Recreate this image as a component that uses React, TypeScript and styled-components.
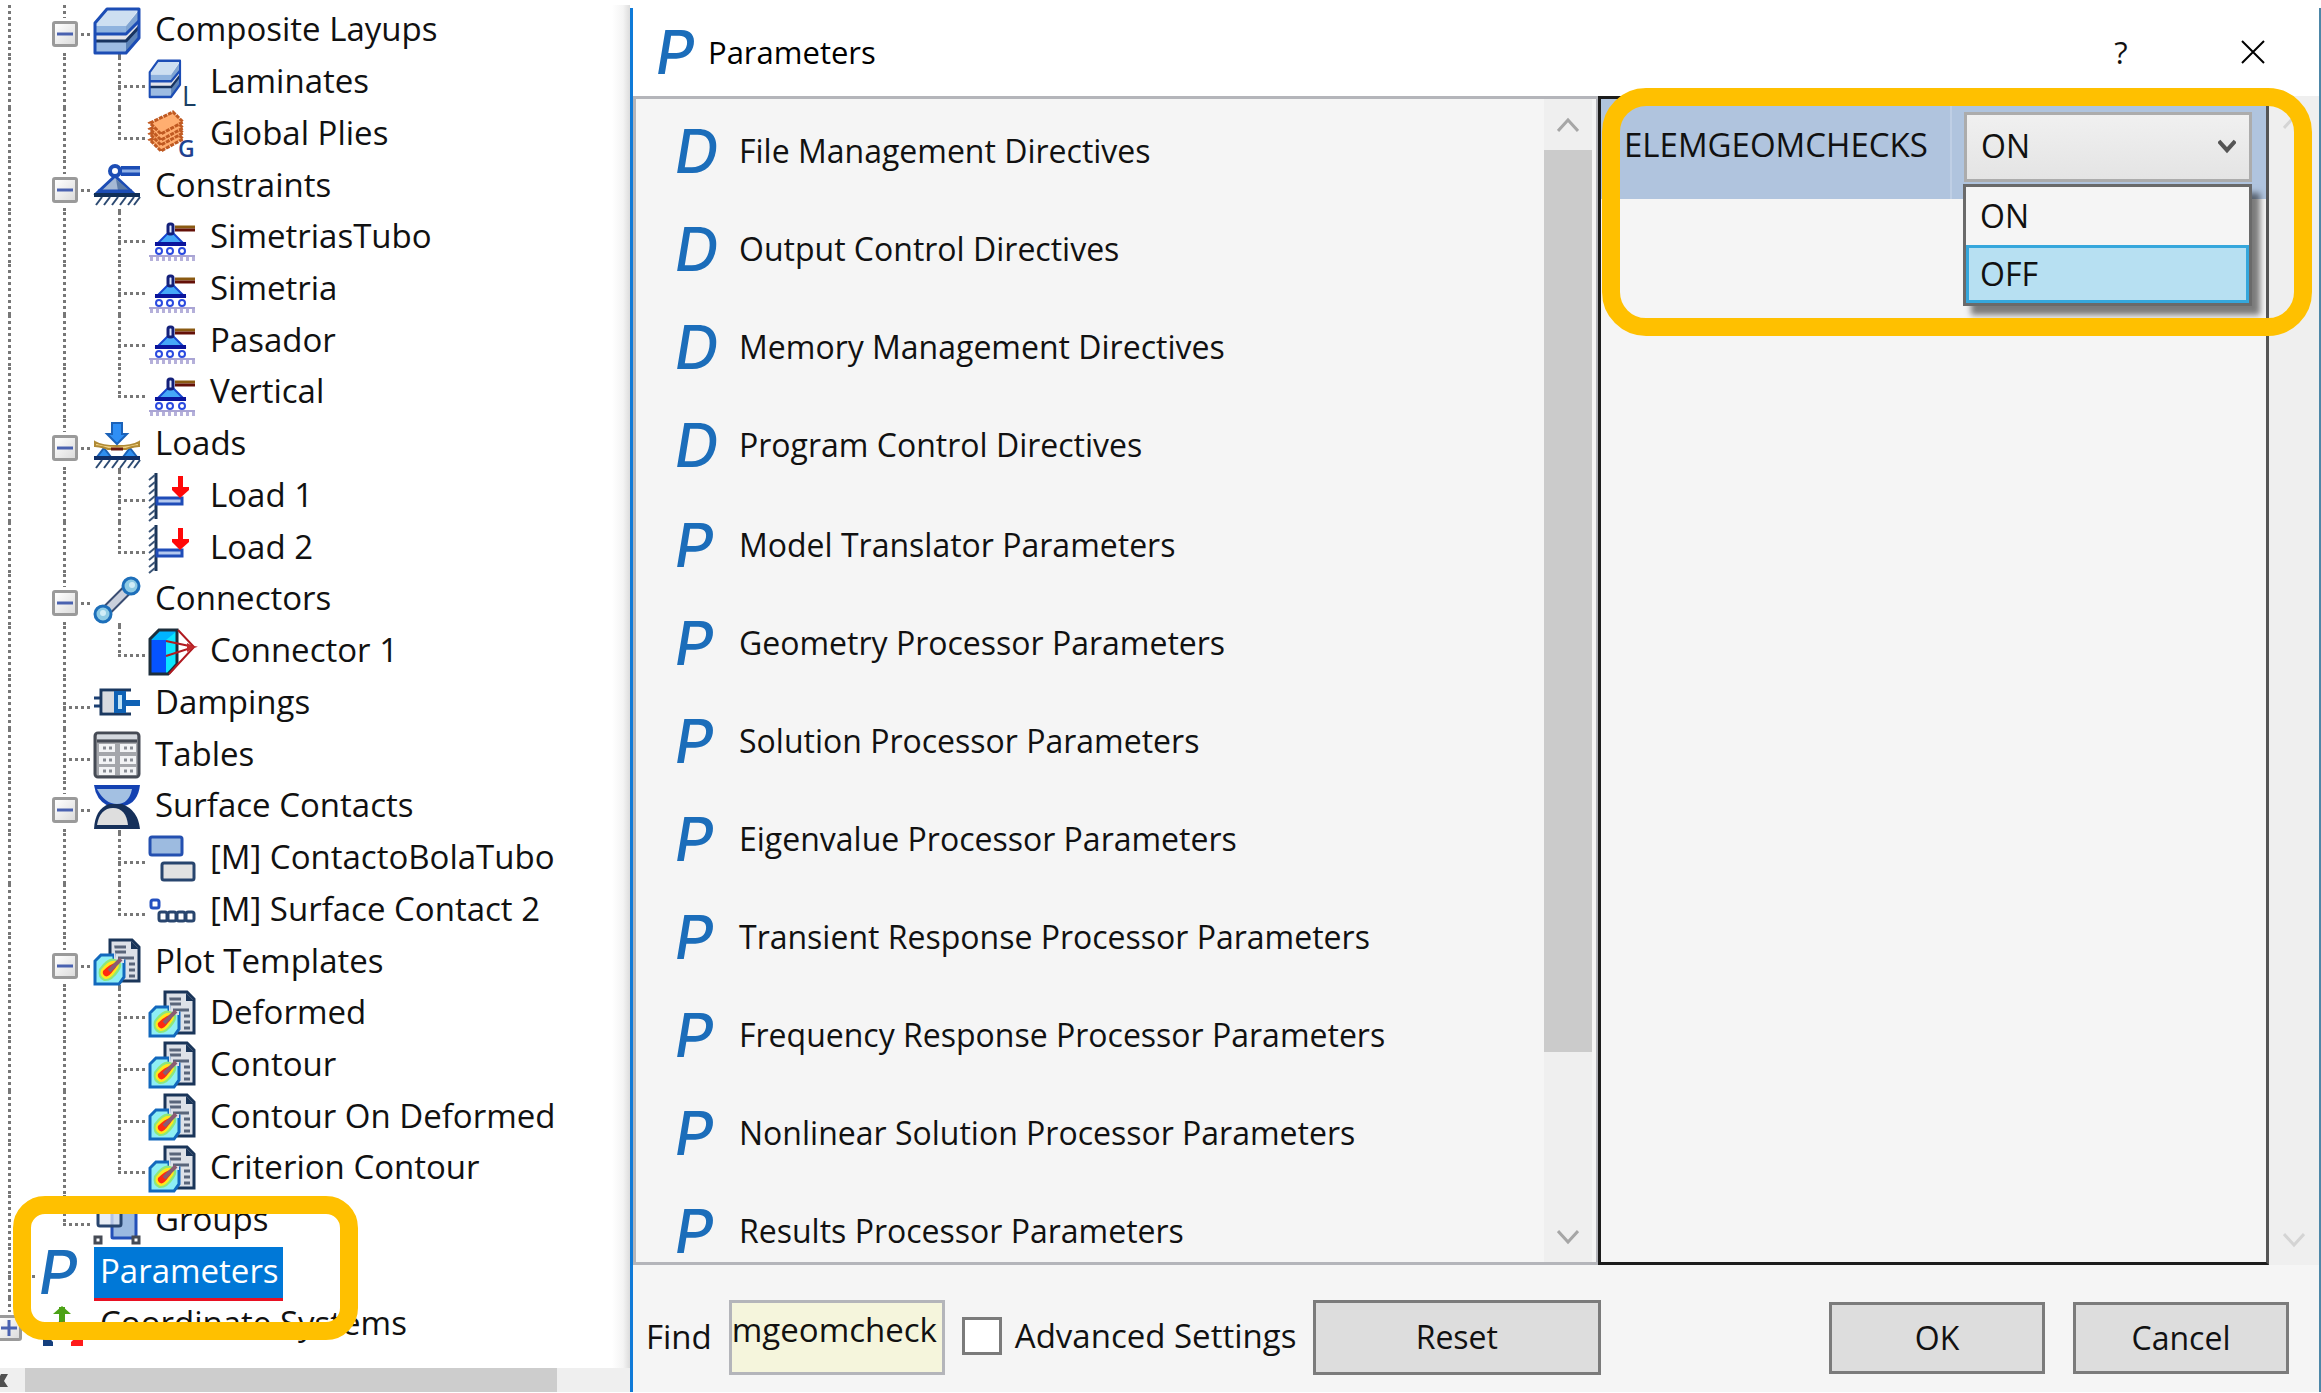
import React from 'react';
import styled, { createGlobalStyle, css } from 'styled-components';

const GlobalStyle = createGlobalStyle`
  * { box-sizing: border-box; }
  body {
    margin: 0;
    background: #fff;
    color: #111;
    font-family: 'Open Sans', 'Noto Sans', sans-serif;
    font-size: 33px;
    line-height: 40px;
  }
  ul { list-style: none; margin: 0; padding: 0; }
  button, input, select { font: inherit; color: inherit; margin: 0; border-radius: 0; }
`;

const Page = styled.div`
  display: flex;
  height: 100vh;
  min-height: 1393px;
  padding-bottom: 1px;
  overflow: hidden;
`;

/* ---------- model tree ---------- */

const TreePanel = styled.nav`
  position: relative;
  flex: 0 0 630px;
  display: flex;
  flex-direction: column;
  margin-top: 5px;
  background: linear-gradient(to left, #dcdcdc, #f4f4f4 7px, #fff 18px);
`;

const TreeList = styled.ul`
  flex: 1;
  display: grid;
  grid-auto-rows: 1fr;
  padding-bottom: 18px;
`;

const TreeRow = styled.li`
  display: flex;
  min-height: 0;
`;

type Line = 'none' | 'full' | 'end' | 'pass';

const dotsV = 'repeating-linear-gradient(to bottom, #777 0 3px, transparent 3px 6px)';
const dotsH = 'repeating-linear-gradient(to right, #777 0 3px, transparent 3px 6px)';

const Gutter = styled.span<{ $line: Line; $root?: boolean }>`
  flex: none;
  width: ${(p) => (p.$root ? 37 : 55)}px;
  display: flex;
  align-items: center;
  justify-content: ${(p) => (p.$root ? 'flex-start' : 'center')};
  padding-top: 7px;
  ${(p) => {
    const x = p.$root ? 8 : 26;
    const tall = p.$line === 'end' ? 'calc(50% + 4px)' : '100%';
    if (p.$line === 'none') return '';
    if (p.$line === 'pass')
      return css`
        background: ${dotsV} ${x}px 0 / 3px 100% no-repeat;
      `;
    return css`
      background:
        ${dotsV} ${x}px 0 / 3px ${tall} no-repeat,
        ${dotsH} ${x}px calc(50% + 4px) / 31px 3px no-repeat;
    `;
  }}
`;

const Expander = styled.button<{ $root?: boolean }>`
  display: grid;
  place-items: center;
  width: 26px;
  height: 26px;
  padding: 0;
  margin-left: ${(p) => (p.$root ? '-4px' : '0')};
  border: 3px solid #9a9a9a;
  border-radius: 3px;
  background: linear-gradient(135deg, #fff, #dcdcdc);
  box-shadow: 0 0 0 3px #fff;
`;

const IconCell = styled.span<{ $open?: boolean }>`
  flex: none;
  width: 57px;
  display: flex;
  align-items: center;
  padding-left: 2px;
  ${(p) =>
    p.$open &&
    css`
      background: ${dotsV} 26px 100% / 3px 3px no-repeat;
    `}
`;

const Label = styled.a<{ $selected?: boolean }>`
  display: flex;
  align-items: center;
  padding: 0 4px 3px 6px;
  color: #111;
  text-decoration: none;
  white-space: nowrap;
  ${(p) =>
    p.$selected &&
    css`
      color: #fff;
      background: #0078d7;
      box-shadow: 0 3px 0 #e81123;
    `}
`;

const HScroll = styled.div`
  flex: none;
  display: flex;
  align-items: center;
  height: 24px;
  background: #efefef;
`;

const HThumb = styled.div`
  width: 532px;
  height: 100%;
  margin-left: 17px;
  background: #cdcdcd;
`;

const Highlight = styled.div<{ $radius: number }>`
  position: absolute;
  border: 18px solid #ffc000;
  border-radius: ${(p) => p.$radius}px;
  pointer-events: none;
`;

const TreeHighlight = styled(Highlight)`
  left: 13px;
  bottom: 52px;
  width: 345px;
  height: 144px;
`;

const LetterMark = styled.span`
  width: 46px;
  color: #1b6dba;
  font-family: Inter, 'Open Sans', sans-serif;
  font-size: 60px;
  font-style: italic;
  font-weight: 500;
  line-height: 46px;
`;

/* ---------- dialog ---------- */

const Dialog = styled.section`
  flex: 1;
  min-width: 0;
  display: flex;
  flex-direction: column;
  margin-top: 8px;
  border-left: 3px solid #0f7ad8;
  border-right: 2px solid #4d87a8;
  background: #f5f5f5;
`;

const TitleBar = styled.header`
  flex: none;
  display: flex;
  align-items: center;
  height: 88px;
  padding: 0 33px 0 23px;
  background: #fff;
`;

const Title = styled.h1`
  flex: 1;
  margin: 0 0 0 6px;
  font-size: 31px;
  font-weight: 400;
  line-height: 40px;
  color: #000;
`;

const TitleButton = styled.button`
  display: grid;
  place-items: center;
  width: 66px;
  height: 60px;
  padding: 0;
  border: 0;
  background: none;
  margin-left: 66px;
  font-size: 31px;
`;

const Panes = styled.div`
  flex: 1;
  min-height: 0;
  display: grid;
  grid-template-columns: minmax(0, 965fr) minmax(0, 721fr);
`;

const ListPane = styled.div`
  display: flex;
  min-height: 0;
  border: 3px solid #b4b5ba;
  border-right-width: 2px;
`;

const Directives = styled.ul`
  flex: 1;
  min-width: 0;
  padding-top: 3px;
  overflow: hidden;
`;

const Directive = styled.li<{ $gap: boolean }>`
  display: flex;
  align-items: center;
  gap: 18px;
  height: 98px;
  padding-left: 39px;
  margin-top: ${(p) => (p.$gap ? 2 : 0)}px;
  font-size: 32px;
  white-space: nowrap;
`;

const Scrollbar = styled.div<{ $faint?: boolean }>`
  flex: none;
  width: ${(p) => (p.$faint ? 50 : 48)}px;
  margin-right: ${(p) => (p.$faint ? 0 : 4)}px;
  display: flex;
  flex-direction: column;
  align-items: center;
  justify-content: space-between;
  background: #efefef;
  color: ${(p) => (p.$faint ? '#d4d4d4' : '#a6a6a6')};
`;

const ScrollButton = styled.button`
  flex: none;
  display: grid;
  place-items: center;
  width: 100%;
  height: 51px;
  padding: 0;
  border: 0;
  background: none;
`;

const ScrollTrack = styled.div`
  flex: 1;
  width: 100%;
`;

const ScrollThumb = styled.div`
  height: 85%;
  background: #cbcbcb;
`;

const SettingsPane = styled.div`
  position: relative;
  display: flex;
  min-height: 0;
`;

const SettingsBox = styled.div`
  flex: 1;
  min-width: 0;
  border: 3px solid #1c1c1c;
  border-right-color: #555;
`;

const Setting = styled.div`
  display: flex;
  height: 100px;
  background: #b0c4de;
`;

const SettingLabel = styled.label`
  flex: 1;
  min-width: 0;
  padding: 26px 0 0 23px;
  border-right: 2px solid #bfcfe5;
`;

const SettingValue = styled.div`
  flex: none;
  width: 314px;
  padding: 13px 14px 0 12px;
`;

const Combo = styled.div`
  position: relative;
  font-size: 32px;
  svg { position: absolute; right: 16px; top: 25px; pointer-events: none; color: #555; }
`;

const Select = styled.select`
  display: block;
  width: 100%;
  height: 70px;
  padding: 0 14px 2px;
  appearance: none;
  border: 3px solid #acacac;
  background: linear-gradient(#f0f0f0, #e4e4e4);
`;

const Popup = styled.ul`
  position: absolute;
  left: -1px;
  right: 0;
  top: 72px;
  border: 3px solid #6a6a6a;
  background: #f5f5f5;
  box-shadow: 8px 9px 6px rgba(0, 0, 0, 0.5);
  clip-path: inset(0 -20px -20px 0);
`;

const Choice = styled.li<{ $active?: boolean }>`
  height: 58px;
  padding: 6px 11px;
  border: 3px solid ${(p) => (p.$active ? '#35a7dc' : 'transparent')};
  background: ${(p) => (p.$active ? '#b7e0f2' : 'transparent')};
`;

const SettingHighlight = styled(Highlight)`
  left: 4px;
  right: 7px;
  top: -8px;
  height: 248px;
`;

const Footer = styled.footer`
  flex: none;
  display: flex;
  align-items: center;
  height: 127px;
  padding: 17px 30px 0 13px;
`;

const FindBox = styled.input`
  width: 216px;
  height: 75px;
  margin: 0 17px;
  padding: 0 0 16px;
  border: 3px solid #b4b5ba;
  outline: 0;
  background: #f5f5dc;
`;

const CheckBox = styled.input`
  appearance: none;
  width: 40px;
  height: 38px;
  margin: 0 13px 0 0;
  border: 3px solid #7b7b7b;
  background: #fff;
`;

const CheckLabel = styled.label`
  display: flex;
  align-items: center;
  width: 351px;
  padding-bottom: 2px;
  white-space: nowrap;
`;

const Button = styled.button<{ $wide?: boolean }>`
  width: ${(p) => (p.$wide ? 288 : 216)}px;
  height: ${(p) => (p.$wide ? 75 : 72)}px;
  padding: 0;
  border: 3px solid #7b7b7b;
  background: #ddd;
  font-size: 32px;
`;

const Actions = styled.div`
  display: flex;
  gap: 28px;
  margin-left: auto;
  padding-top: 2px;
`;

/* ---------- icons ---------- */

const Icon = ({ children }: { children: React.ReactNode }) => (
  <svg width="46" height="46" viewBox="0 0 46 46" overflow="visible" aria-hidden="true">
    {children}
  </svg>
);

const Stack = () => (
  <g strokeLinejoin="round">
    <path d="M1 16 13 1H45L32 18H1Z" fill="#cddff1" />
    <path d="M1 18H32V25H1Z" fill="#8fb3de" />
    <path d="M32 18 45 2V13L32 25Z" fill="#7fa4d2" />
    <path d="M1 26H32L45 14V19L32 32H1Z" fill="#e3e4ea" />
    <path d="M1 34H32V45H1Z" fill="#9dbce2" />
    <path d="M32 34 45 20V30L32 45Z" fill="#5b83b8" />
    <path d="M1 26H32L45 13" fill="none" stroke="#1c4db5" strokeWidth="3" />
    <path d="M1 33H32L45 19" fill="none" stroke="#17335f" strokeWidth="3" />
    <path d="M1 15 13 1H45V30L32 45H1Z" fill="none" stroke="#1c4db5" strokeWidth="3" />
  </g>
);

const CompositeIcon = () => <Icon><Stack /></Icon>;

const LaminateIcon = () => (
  <Icon>
    <g transform="scale(.69 .82)"><Stack /></g>
    <text x="33" y="46" fontSize="27" fill="#1a3f63" fontFamily="Open Sans">L</text>
  </Icon>
);

const PliesIcon = () => (
  <Icon>
    {[17, 11, 6, 0].map((y) => (
      <path key={y} d={`M1 ${12 + y} 24 ${1 + y} 34 ${11 + y} 12 ${23 + y}Z`} fill="#ffae70" stroke="#c05a22" strokeWidth="3" strokeDasharray="4 1" />
    ))}
    <text x="29" y="46" fontSize="23" fontWeight="600" fill="#1f418f" fontFamily="Open Sans">G</text>
  </Icon>
);

const hatch = (y: number, color: string) =>
  [8, 16, 24, 32, 40, 46].map((x) => (
    <path key={x} d={`M${x} ${y}l-6 8`} stroke={color} strokeWidth="2" />
  ));

const ConstraintsIcon = () => (
  <Icon>
    <path d="M27 8H46" stroke="#1c4db5" strokeWidth="10" />
    <path d="M28 8H46" stroke="#8fb0e6" strokeWidth="3" />
    <path d="M21 13 39 30H3Z" fill="#a5b9d4" stroke="#1c4db5" strokeWidth="3" />
    <path d="M22 16 36 28H24Z" fill="#5d7ca6" />
    <circle cx="21" cy="8" r="5" fill="#fff" stroke="#1c4db5" strokeWidth="4" />
    <path d="M4 28H38" stroke="#1c4db5" strokeWidth="3" />
    <path d="M0 32H46" stroke="#102f58" strokeWidth="4" />
    {hatch(34, '#2c4a72')}
  </Icon>
);

const SupportIcon = () => (
  <Icon>
    <path d="M26 12H46" stroke="#8a5a12" strokeWidth="3" />
    <path d="M26 15H46" stroke="#641008" strokeWidth="3" />
    <path d="M19 18H24L35 29H8Z" fill="#46a8f8" stroke="#1646d0" strokeWidth="2" />
    <path d="M6 29H37" stroke="#0a149c" strokeWidth="4" />
    <rect x="19" y="9" width="5" height="10" rx="2" fill="#dfe8ff" stroke="#14207a" strokeWidth="3" />
    {[10, 21, 33].map((x) => <circle key={x} cx={x} cy="36" r="3" fill="#fff" stroke="#2a4ae0" strokeWidth="2" />)}
    <path d="M0 41H46" stroke="#a9a4d4" strokeWidth="2" />
    <path d="M1 44H46" stroke="#b5b0da" strokeWidth="4" strokeDasharray="3 3" />
  </Icon>
);

const LoadsIcon = () => (
  <Icon>
    <path d="M10 26 17 35H3ZM36 26 43 35H29Z" fill="#2f8ff0" stroke="#1b62b8" strokeWidth="2" />
    <path d="M1 20V24Q10 25 14 27H32Q36 25 45 24V20Q38 24 23 24T1 20Z" fill="#f0d080" stroke="#b08a34" strokeWidth="2" />
    <path d="M17 27H29" stroke="#6b1a10" strokeWidth="3" />
    <path d="M18 1H28V12H33L23 22 13 12H18Z" fill="#2f8ff5" stroke="#1b62b8" strokeWidth="2" />
    <path d="M0 36H46" stroke="#102f68" strokeWidth="4" />
    {hatch(38, '#2c4a72')}
  </Icon>
);

const LoadIcon = () => (
  <Icon>
    <path d="M7 0V46" stroke="#1a3558" strokeWidth="3" />
    {[2, 9, 16, 23, 30, 37, 43].map((y) => <path key={y} d={`M6 ${y}l-6 5`} stroke="#3c5678" strokeWidth="2" />)}
    <rect x="8" y="25" width="25" height="6" fill="#b4c8ee" stroke="#1f4cb8" strokeWidth="3" />
    <path d="M29 3H34V14H40V17L31 25 23 17V14H29Z" fill="#ff0808" />
  </Icon>
);

const ConnectorsIcon = () => (
  <Icon>
    <path d="M10 36 36 10" stroke="#3a4d72" strokeWidth="11" />
    <path d="M10 36 36 10" stroke="#c9cfdc" strokeWidth="7" />
    <circle cx="37" cy="9" r="8" fill="#8fcbe4" stroke="#1d6fba" strokeWidth="3" />
    <circle cx="9" cy="37" r="8" fill="#8fcbe4" stroke="#1d6fba" strokeWidth="3" />
    <circle cx="38" cy="8" r="3" fill="#d0edf7" />
    <circle cx="9" cy="36" r="3" fill="#d0edf7" />
  </Icon>
);

const ConnectorIcon = () => (
  <Icon>
    <path d="M1 10 10 1H28V35L19 45H1Z" fill="#00b4ff" />
    <path d="M1 11H17V45H1Z" fill="#0553ff" />
    <path d="M17 11 28 2V35L17 45Z" fill="#0ce6ff" />
    <path d="M1 10 10 1H28V35L19 45H1Z" fill="none" stroke="#1c2e3c" strokeWidth="3" />
    <path d="M29 1 45 18 20 45M17 12 45 18 17 27" fill="none" stroke="#b01a20" strokeWidth="2" />
    <path d="M38 14 46 18 38 23Z" fill="#c22a2c" />
  </Icon>
);

const DampingsIcon = () => (
  <Icon>
    <path d="M0 18H6M0 26H6" stroke="#1a3f73" strokeWidth="3" />
    <path d="M37 10H7V34H37" fill="none" stroke="#1a3860" strokeWidth="3" />
    <rect x="9" y="12" width="12" height="20" fill="#d8dbe0" />
    <rect x="22" y="13" width="8" height="18" fill="#bfe3f8" stroke="#0f62b5" strokeWidth="4" />
    <path d="M31 23H46" stroke="#0f62b5" strokeWidth="6" />
  </Icon>
);

const TablesIcon = () => (
  <Icon>
    <rect x="1" y="1" width="44" height="44" rx="3" fill="#a4a6ab" stroke="#464b55" strokeWidth="3" />
    <path d="M3 5H43" stroke="#d5d9df" strokeWidth="5" />
    <path d="M3 9H43" stroke="#464b55" strokeWidth="3" />
    {[12, 24, 35].map((y) => [5, 26].map((x) => (
      <g key={`${x}-${y}`}>
        <rect x={x} y={y} width="16" height="8" fill="#f2f3f5" />
        <path d={`M${x + 4} ${y + 4}h3m3 0h3`} stroke="#888c93" strokeWidth="3" />
      </g>
    )))}
  </Icon>
);

const SurfaceIcon = () => (
  <Icon>
    <path d="M0 1H46Q44 19 30 22H14Q2 16 0 1Z" fill="#1442b2" />
    <path d="M3 5H38Q35 20 23 20T3 5Z" fill="#a3c0e2" />
    <path d="M0 45Q1 25 15 20H28Q44 26 46 45Z" fill="#16305a" />
    <path d="M3 41Q6 24 19 24 32 24 34 41Z" fill="#dedede" />
  </Icon>
);

const ContactPairIcon = () => (
  <Icon>
    <rect x="1" y="1" width="32" height="18" rx="2" fill="#9dbbe0" stroke="#2450b0" strokeWidth="3" />
    <rect x="13" y="27" width="32" height="17" rx="2" fill="#e2e2e2" stroke="#28456e" strokeWidth="3" />
  </Icon>
);

const ChainIcon = () => (
  <Icon>
    <rect x="2" y="13" width="8" height="8" rx="2" fill="#fff" stroke="#2450c0" strokeWidth="3" />
    {[10, 19, 28, 37].map((x) => <rect key={x} x={x} y="25" width="8" height="9" rx="2" fill="#fff" stroke="#28456e" strokeWidth="3" />)}
  </Icon>
);

const PlotIcon = () => (
  <Icon>
    <path d="M16 1H38L45 8V42H16Z" fill="#dde1e8" stroke="#1a3559" strokeWidth="3" />
    <path d="M37 2V10H45Z" fill="#1a3559" />
    <path d="M20 8H32M20 13H32M24 19H40M35 25H41M35 31H41M35 37H41" stroke="#59657a" strokeWidth="3" />
    <path d="M7 16H20V22H30V38L25 45H1V22Z" fill="#8eeef4" stroke="#1268bd" strokeWidth="3" />
    <path d="M20 5V24H30V20H22" fill="#dde1e8" />
    <path d="M5 30Q14 17 21 20 31 23 25 32 18 43 10 42 3 39 5 30Z" fill="#8be87c" />
    <path d="M7 31Q15 20 22 22 28 25 22 32 16 41 11 40 5 37 7 31Z" fill="#ffe81c" />
    <path d="M9 32Q16 25 21 24 25 26 19 32 14 39 11 37 8 35 9 32Z" fill="#ff2a10" />
    <path d="M15 32 27 20" stroke="#8a5c72" strokeWidth="4" />
  </Icon>
);

const GroupsIcon = () => (
  <Icon>
    <rect x="18" y="14" width="24" height="26" rx="1" fill="#9bb9e0" stroke="#2450b8" strokeWidth="3" />
    <rect x="4" y="2" width="23" height="26" rx="2" fill="#e2e8f2" fillOpacity=".75" stroke="#28456e" strokeWidth="3" />
    <rect x="1" y="39" width="6" height="6" fill="#fff" stroke="#464b55" strokeWidth="3" />
    <rect x="39" y="39" width="6" height="6" fill="#fff" stroke="#464b55" strokeWidth="3" />
  </Icon>
);

const AxesIcon = () => (
  <Icon>
    <path d="M23 22V6" stroke="#4ca216" strokeWidth="6" />
    <path d="M23 5 32 13H14Z" fill="#4ca216" />
    <path d="M22 22 6 38" stroke="#143f7d" strokeWidth="5" />
    <path d="M4 30V45H14V41Z" fill="#143f7d" />
    <path d="M23 22 38 38" stroke="#ff1a1a" strokeWidth="5" />
    <path d="M44 30V45H32V41Z" fill="#ff1a1a" />
  </Icon>
);

const ParameterMark = () => <LetterMark aria-hidden="true">P</LetterMark>;

const Chevron = ({ up, size = 22, weight = 3 }: { up?: boolean; size?: number; weight?: number }) => (
  <svg width={size} height={size} viewBox="0 0 22 22" fill="none" stroke="currentColor" strokeWidth={weight} aria-hidden="true">
    <path d={up ? 'M1 17 11 6 21 17' : 'M1 5 11 16 21 5'} />
  </svg>
);

/* ---------- data ---------- */

type Node = { level: 1 | 2 | 3; text: string; icon: () => React.ReactElement; open?: boolean; closed?: boolean; last?: boolean; selected?: boolean };

const nodes: Node[] = [
  { level: 2, text: 'Composite Layups', icon: CompositeIcon, open: true },
  { level: 3, text: 'Laminates', icon: LaminateIcon },
  { level: 3, text: 'Global Plies', icon: PliesIcon, last: true },
  { level: 2, text: 'Constraints', icon: ConstraintsIcon, open: true },
  { level: 3, text: 'SimetriasTubo', icon: SupportIcon },
  { level: 3, text: 'Simetria', icon: SupportIcon },
  { level: 3, text: 'Pasador', icon: SupportIcon },
  { level: 3, text: 'Vertical', icon: SupportIcon, last: true },
  { level: 2, text: 'Loads', icon: LoadsIcon, open: true },
  { level: 3, text: 'Load 1', icon: LoadIcon },
  { level: 3, text: 'Load 2', icon: LoadIcon, last: true },
  { level: 2, text: 'Connectors', icon: ConnectorsIcon, open: true },
  { level: 3, text: 'Connector 1', icon: ConnectorIcon, last: true },
  { level: 2, text: 'Dampings', icon: DampingsIcon },
  { level: 2, text: 'Tables', icon: TablesIcon },
  { level: 2, text: 'Surface Contacts', icon: SurfaceIcon, open: true },
  { level: 3, text: '[M] ContactoBolaTubo', icon: ContactPairIcon },
  { level: 3, text: '[M] Surface Contact 2', icon: ChainIcon, last: true },
  { level: 2, text: 'Plot Templates', icon: PlotIcon, open: true },
  { level: 3, text: 'Deformed', icon: PlotIcon },
  { level: 3, text: 'Contour', icon: PlotIcon },
  { level: 3, text: 'Contour On Deformed', icon: PlotIcon },
  { level: 3, text: 'Criterion Contour', icon: PlotIcon, last: true },
  { level: 2, text: 'Groups', icon: GroupsIcon, last: true },
  { level: 1, text: 'Parameters', icon: ParameterMark, selected: true },
  { level: 1, text: 'Coordinate Systems', icon: AxesIcon, closed: true, last: true },
];

const directives = [
  ['D', 'File Management Directives'],
  ['D', 'Output Control Directives'],
  ['D', 'Memory Management Directives'],
  ['D', 'Program Control Directives'],
  ['P', 'Model Translator Parameters'],
  ['P', 'Geometry Processor Parameters'],
  ['P', 'Solution Processor Parameters'],
  ['P', 'Eigenvalue Processor Parameters'],
  ['P', 'Transient Response Processor Parameters'],
  ['P', 'Frequency Response Processor Parameters'],
  ['P', 'Nonlinear Solution Processor Parameters'],
  ['P', 'Results Processor Parameters'],
];

const lineFor = (node: Node, column: number): Line => {
  if (column < node.level) return 'pass';
  return node.last ? 'end' : 'full';
};

const TreeItem = ({ node }: { node: Node }) => {
  const columns = Array.from({ length: node.level }, (_, i) => i + 1);
  const Glyph = node.icon;
  return (
    <TreeRow>
      {columns.map((column) => (
        <Gutter key={column} $root={column === 1} $line={lineFor(node, column)}>
          {column === node.level && (node.open || node.closed) && (
            <Expander $root={column === 1} aria-label={`${node.open ? 'Collapse' : 'Expand'} ${node.text}`}>
              <svg width="16" height="16" viewBox="0 0 16 16" stroke="#4a62b0" strokeWidth="3" aria-hidden="true">
                <path d={node.open ? 'M0 8H16' : 'M0 8H16M8 0V16'} />
              </svg>
            </Expander>
          )}
        </Gutter>
      ))}
      <IconCell $open={node.open}><Glyph /></IconCell>
      <Label href="#" $selected={node.selected}>{node.text}</Label>
    </TreeRow>
  );
};

export default function App() {
  return (
    <>
      <GlobalStyle />
      <Page>
        <TreePanel aria-label="Model tree">
          <TreeList>
            {nodes.map((node) => <TreeItem key={node.text} node={node} />)}
          </TreeList>
          <HScroll>
            <svg width="8" height="14" viewBox="0 0 8 14" aria-hidden="true">
              <path d="M1 1H8L4 8 8 14H0V3Z" fill="#505050" />
            </svg>
            <HThumb />
          </HScroll>
          <TreeHighlight $radius={32} />
        </TreePanel>

        <Dialog aria-label="Parameters">
          <TitleBar>
            <ParameterMark />
            <Title>Parameters</Title>
            <TitleButton aria-label="Help">?</TitleButton>
            <TitleButton aria-label="Close">
              <svg width="24" height="24" viewBox="0 0 24 24" stroke="#000" strokeWidth="2" aria-hidden="true">
                <path d="M1 1 23 23M23 1 1 23" />
              </svg>
            </TitleButton>
          </TitleBar>

          <Panes>
            <ListPane>
              <Directives>
                {directives.map(([mark, text], i) => (
                  <Directive key={text} $gap={i === 4}>
                    <LetterMark aria-hidden="true">{mark}</LetterMark>
                    {text}
                  </Directive>
                ))}
              </Directives>
              <Scrollbar>
                <ScrollButton aria-label="Scroll up"><Chevron up /></ScrollButton>
                <ScrollTrack><ScrollThumb /></ScrollTrack>
                <ScrollButton aria-label="Scroll down"><Chevron /></ScrollButton>
              </Scrollbar>
            </ListPane>

            <SettingsPane>
              <SettingsBox>
                <Setting>
                  <SettingLabel htmlFor="elemgeomchecks">ELEMGEOMCHECKS</SettingLabel>
                  <SettingValue>
                    <Combo>
                      <Select id="elemgeomchecks" defaultValue="ON">
                        <option>ON</option>
                        <option>OFF</option>
                      </Select>
                      <Chevron size={18} weight={5} />
                      <Popup role="listbox" aria-label="ELEMGEOMCHECKS values">
                        <Choice role="option" aria-selected="false">ON</Choice>
                        <Choice role="option" aria-selected="true" $active>OFF</Choice>
                      </Popup>
                    </Combo>
                  </SettingValue>
                </Setting>
              </SettingsBox>
              <Scrollbar $faint>
                <ScrollButton aria-label="Scroll up"><Chevron up /></ScrollButton>
                <ScrollButton aria-label="Scroll down"><Chevron /></ScrollButton>
              </Scrollbar>
              <SettingHighlight $radius={44} />
            </SettingsPane>
          </Panes>

          <Footer>
            <label htmlFor="find">Find</label>
            <FindBox id="find" type="text" defaultValue="mgeomcheck" />
            <CheckLabel>
              <CheckBox type="checkbox" />
              Advanced Settings
            </CheckLabel>
            <Button type="button" $wide>Reset</Button>
            <Actions>
              <Button type="button">OK</Button>
              <Button type="button">Cancel</Button>
            </Actions>
          </Footer>
        </Dialog>
      </Page>
    </>
  );
}
